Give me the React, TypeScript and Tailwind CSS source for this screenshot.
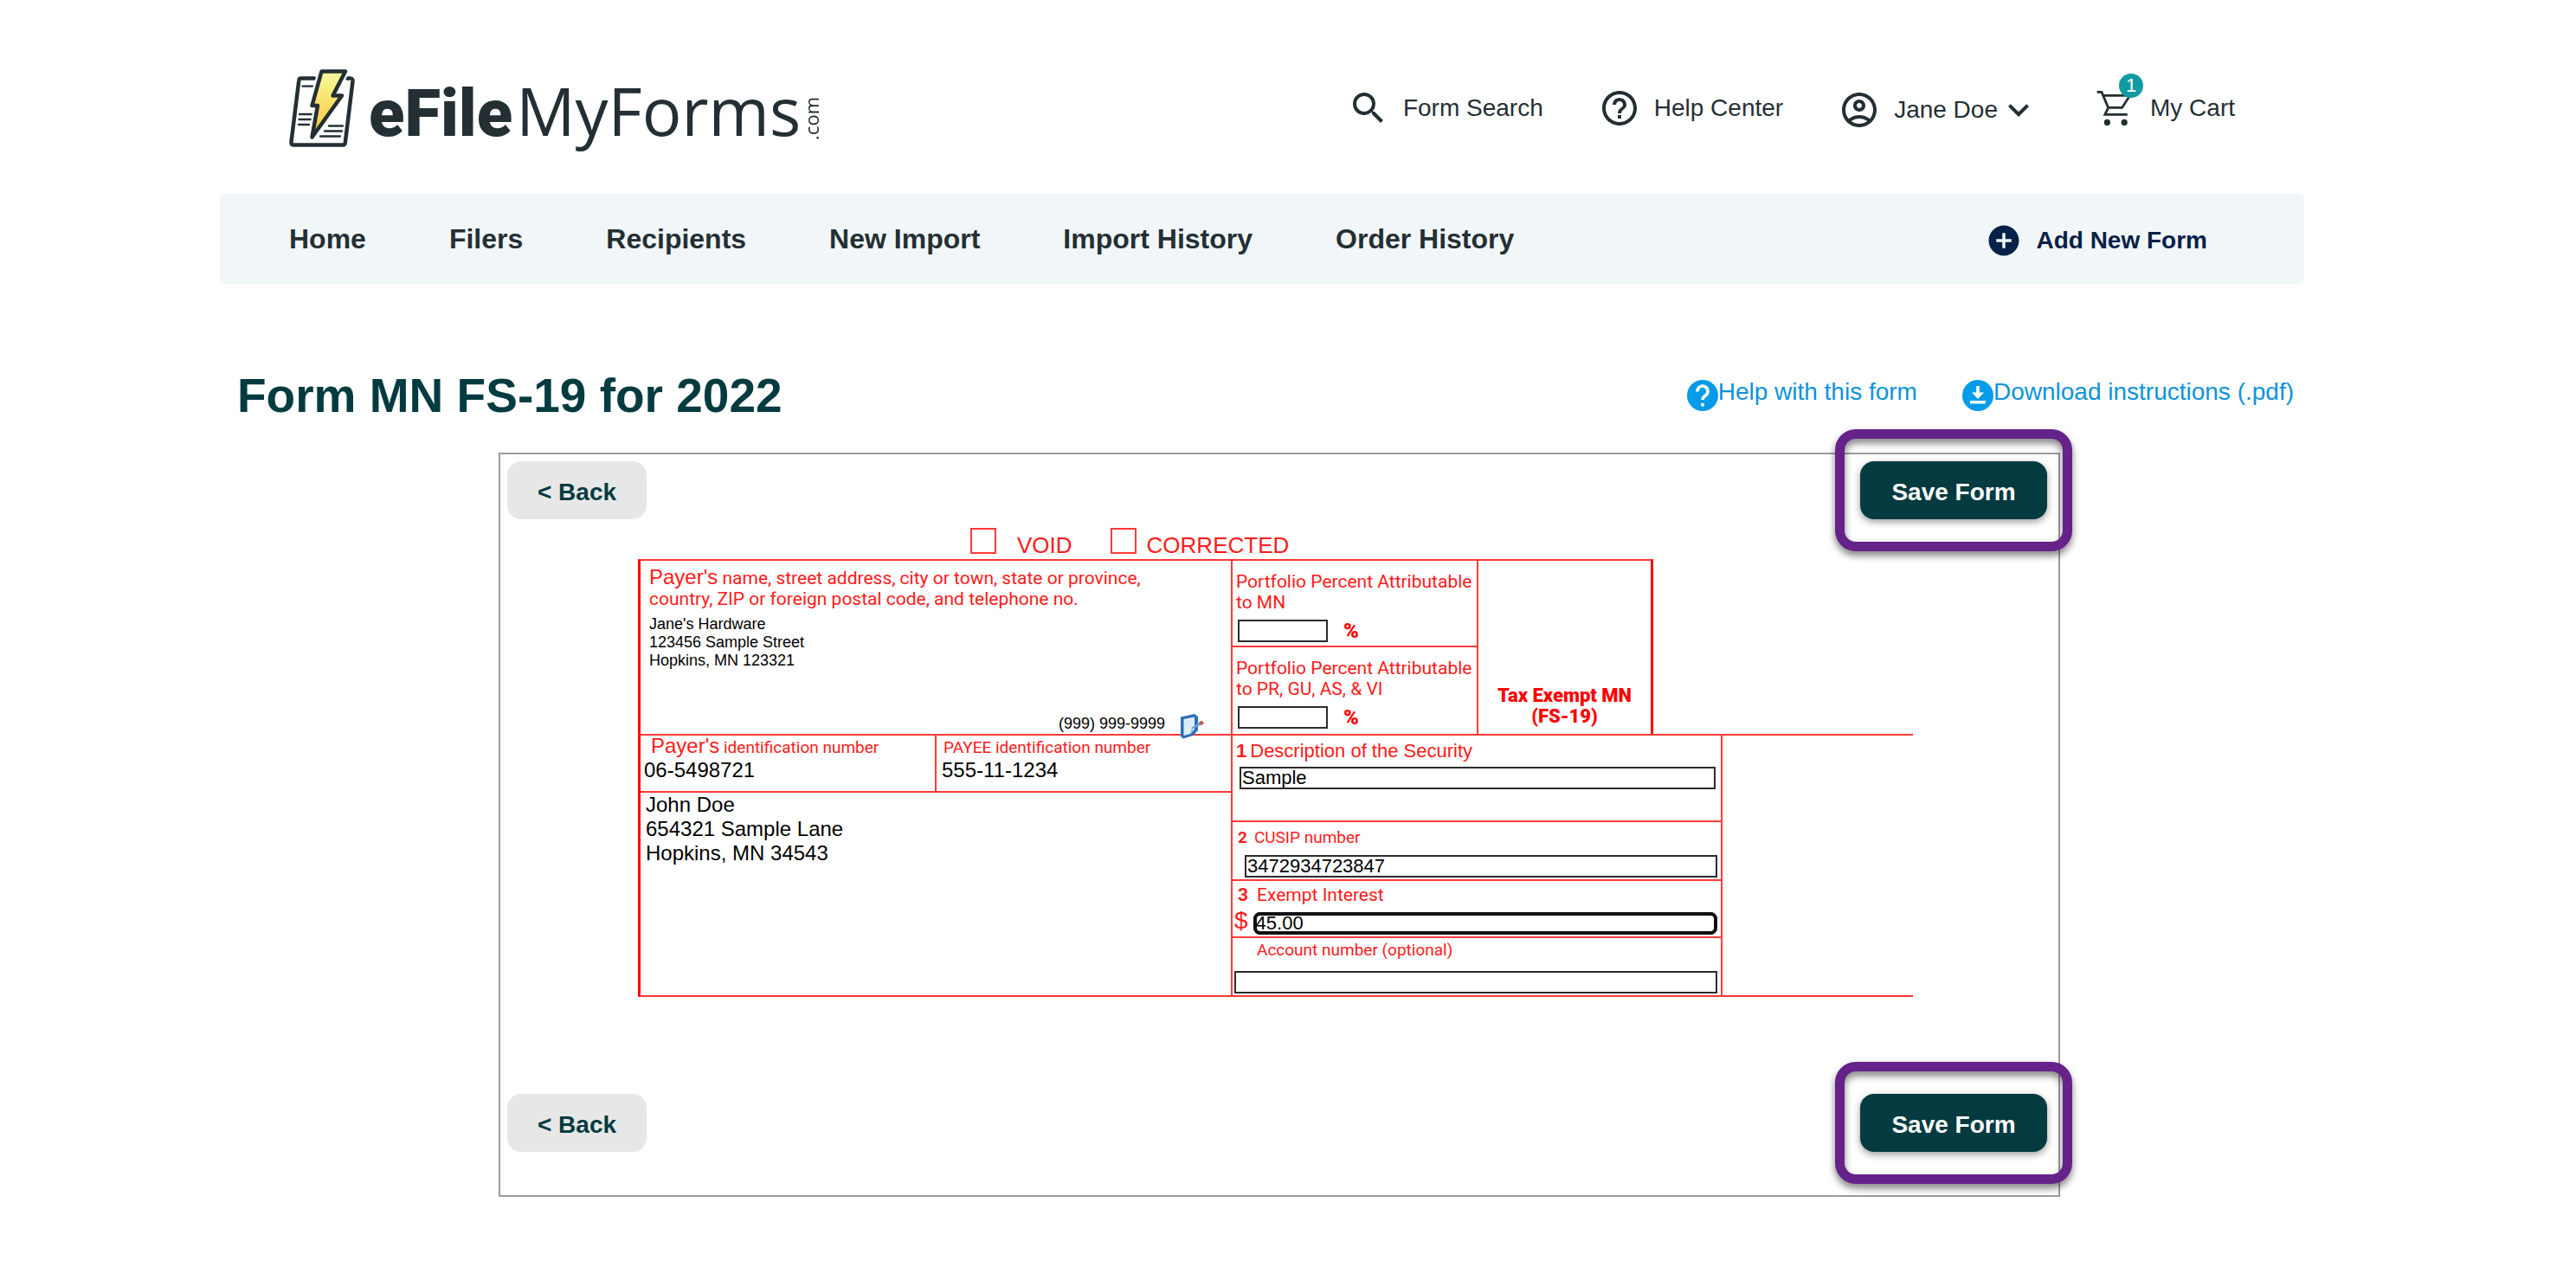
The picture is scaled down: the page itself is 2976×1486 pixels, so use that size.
import type { ReactNode } from "react";
import {
  MdAddCircle,
  MdExpandMore,
  MdHelpOutline,
  MdOutlineAccountCircle,
  MdSearch,
} from "react-icons/md";

const navItems = [
  "Home",
  "Filers",
  "Recipients",
  "New Import",
  "Import History",
  "Order History",
];

function LogoMark() {
  return (
    <svg width="76" height="90" viewBox="0 0 76 90" fill="none" aria-hidden="true">
      <defs>
        <linearGradient id="bolt" x1="0" y1="0" x2="0" y2="1">
          <stop offset="0" stopColor="#f8fb9c" />
          <stop offset="1" stopColor="#fcc035" />
        </linearGradient>
      </defs>
      <g stroke="#242f34" strokeLinecap="round" strokeLinejoin="round">
        <path
          d="M29 10.500H13.500Q11.500 10.500 11.300 13L2.500 84Q2.200 87.500 5 87.500H62Q64.500 87.500 64.800 85L73.500 14Q73.800 10.500 70.500 10.500H67"
          strokeWidth="4.500"
        />
        <path
          d="M15.500 19.700H27M12 52H28M11.500 58H25M11 64H23M46 65.500H62M41 71.500H61M36 77.500H59"
          strokeWidth="2.300"
        />
        <path
          d="M37.500 2.500H65L50.500 30.500H61L26.500 78.500L33 42H26.500Z"
          stroke="#fff"
          strokeWidth="9"
        />
        <path
          d="M37.500 2.500H65L50.500 30.500H61L26.500 78.500L33 42H26.500Z"
          fill="url(#bolt)"
          strokeWidth="4.500"
        />
      </g>
    </svg>
  );
}

function CartIcon() {
  return (
    <svg width="48" height="48" viewBox="0 0 24 24" fill="none" aria-hidden="true">
      <path
        d="M1.300 2.700H4L7.800 11.700H15.800L20.300 4.700H4.900M7.800 11.700L5.900 15.700H18.900"
        stroke="currentColor"
        strokeWidth="1.400"
      />
      <circle cx="7.200" cy="20.200" r="1.800" fill="currentColor" />
      <circle cx="17.100" cy="20.200" r="1.800" fill="currentColor" />
    </svg>
  );
}

function HelpIcon() {
  return (
    <svg width="36" height="36" viewBox="0 0 36 36" fill="none" aria-hidden="true">
      <circle cx="18" cy="18" r="18" fill="#049be8" />
      <path
        d="M12 13.500A6 6 0 1 1 22 17.500Q18 20 18 23"
        stroke="#fff"
        strokeWidth="3.600"
      />
      <path d="M16.200 27h3.600v3.500h-3.600z" fill="#fff" />
    </svg>
  );
}

function DownloadIcon() {
  return (
    <svg width="36" height="36" viewBox="0 0 36 36" aria-hidden="true">
      <circle cx="18" cy="18" r="18" fill="#049be8" />
      <path d="M16.200 7h3.600v7.500h5.200L18 22L11 14.500h5.200zM9 24h18v3.600H9z" fill="#fff" />
    </svg>
  );
}

function EditIcon() {
  return (
    <svg width="30" height="30" viewBox="0 0 30 30" aria-hidden="true">
      <path d="M2 4.500L18 1L22 4V20L16 26L5 29.500L2 27Z" fill="#2f6fb5" />
      <path d="M5.500 7L18 4.500V19L13 24L5.500 26Z" fill="#dcecfa" />
      <path d="M13 24L14 19.500L18 19Z" fill="#8dbbe6" />
      <path d="M14 17L24 10.500L26.500 13.500L15 18.500Z" fill="#6f9fd0" />
      <path d="M23 10.500L26.500 8.500L29 12L26 14Z" fill="#c8574a" />
    </svg>
  );
}

function BackButton() {
  return (
    <button
      type="button"
      className="h-[67px] w-[161px] rounded-2xl bg-[#e7e7e7] pt-1 text-[28px] font-bold text-[#043b40]"
    >
      &lt; Back
    </button>
  );
}

function SaveButton() {
  return (
    <div className="relative">
      <button
        type="button"
        className="h-[67px] w-[216px] rounded-2xl bg-[#043b40] pt-1 text-[28px] font-bold text-white shadow-[0_3px_8px_rgba(0,0,0,0.4)]"
      >
        Save Form
      </button>
      <div className="pointer-events-none absolute -inset-x-[29px] -inset-y-[37px] rounded-3xl border-[11px] border-[#652289] drop-shadow-[0_5px_4px_rgba(0,0,0,0.5)]" />
    </div>
  );
}

type FieldProps = {
  id: string;
  label: ReactNode;
};

function PercentField({ id, label }: FieldProps) {
  return (
    <div className="h-[100px] pl-1 pt-3">
      <label htmlFor={id} className="block text-[21px] leading-6">
        {label}
      </label>
      <div className="mt-2 flex items-center gap-[18px] pl-[2px]">
        <input id={id} className="h-[26px] w-[104px] border-2 border-[#2b2b2b] bg-white" />
        <span className="text-[24px] font-black leading-6 text-[#ff0000]">%</span>
      </div>
    </div>
  );
}

const fieldInput =
  "block h-[26px] border-2 border-[#2b2b2b] bg-white px-px font-['Liberation_Sans',sans-serif] text-[22px] leading-[22px] font-normal text-black";

function FormSheet() {
  return (
    <div className="w-[1473px] font-['Roboto',sans-serif] text-[#ff1a1a]">
      <div className="ml-[384px] flex h-9 gap-[44px] pb-1.5 font-['Liberation_Sans',sans-serif]">
        <label className="flex items-end gap-6 text-[26px] leading-5">
          <input type="checkbox" className="size-[30px] appearance-none border-2 border-[#ff3a3a]" />
          VOID
        </label>
        <label className="flex items-end gap-3 text-[26px] leading-5">
          <input type="checkbox" className="size-[30px] appearance-none border-2 border-[#ff3a3a]" />
          CORRECTED
        </label>
      </div>

      <div className="flex h-[202px] w-[1173px] border-x-[3px] border-t-2 border-[#ff0000] border-t-[#ff3a3a]">
        <div className="flex w-[684px] flex-col border-r-2 border-[#ff3a3a] pt-2">
          <p className="pl-2.5 text-[21px] leading-6">
            <span className="font-['Liberation_Sans',sans-serif] text-[24px] leading-5">Payer's</span>{" "}
            name, street address, city or town, state or province,
            <br />
            country, ZIP or foreign postal code, and telephone no.
          </p>
          <address className="mt-[7px] pl-2.5 font-['Liberation_Sans',sans-serif] text-[18px] not-italic leading-[21px] text-black">
            Jane's Hardware
            <br />
            123456 Sample Street
            <br />
            Hopkins, MN 123321
          </address>
          <div className="mt-auto flex h-6 items-start justify-end gap-4 pr-[30px]">
            <span className="font-['Liberation_Sans',sans-serif] text-[18px] leading-6 text-black">
              (999) 999-9999
            </span>
            <button type="button" aria-label="Edit payer">
              <EditIcon />
            </button>
          </div>
        </div>
        <div className="w-[284px] border-r-2 border-[#ff3a3a]">
          <PercentField
            id="percent-mn"
            label={
              <>
                Portfolio Percent Attributable
                <br />
                to MN
              </>
            }
          />
          <div className="-mt-0.5 border-t-2 border-[#ff3a3a]">
            <PercentField
              id="percent-territories"
              label={
                <>
                  Portfolio Percent Attributable
                  <br />
                  to PR, GU, AS, &amp; VI
                </>
              }
            />
          </div>
        </div>
        <p className="flex-1 self-end pb-2 text-center text-[22px] font-black leading-6 text-[#ff0000]">
          Tax Exempt MN
          <br />
          (FS-19)
        </p>
      </div>

      <div className="flex border-y-2 border-l-[3px] border-[#ff3a3a] border-l-[#ff0000]">
        <div className="w-[684px] border-r-2 border-[#ff3a3a]">
          <div className="flex h-[66px] border-b-2 border-[#ff3a3a]">
            <div className="w-[342px] border-r-2 border-[#ff3a3a] pt-0.5">
              <p className="pl-3 text-[19px] leading-6">
                <span className="font-['Liberation_Sans',sans-serif] text-[24px] leading-5">
                  Payer's
                </span>{" "}
                identification number
              </p>
              <p className="pl-1 font-['Liberation_Sans',sans-serif] text-[24px] leading-7 text-black">
                06-5498721
              </p>
            </div>
            <div className="flex-1 pt-0.5">
              <p className="pl-2 text-[19px] leading-6">PAYEE identification number</p>
              <p className="pl-1.5 font-['Liberation_Sans',sans-serif] text-[24px] leading-7 text-black">
                555-11-1234
              </p>
            </div>
          </div>
          <address className="pl-1.5 font-['Liberation_Sans',sans-serif] text-[24px] not-italic leading-7 text-black">
            John Doe
            <br />
            654321 Sample Lane
            <br />
            Hopkins, MN 34543
          </address>
        </div>

        <div className="w-[566px] border-r-2 border-[#ff3a3a]">
          <div className="h-[100px] border-b-2 border-[#ff3a3a] pl-1 pr-1.5 pt-1.5">
            <label
              htmlFor="description"
              className="flex gap-1 font-['Liberation_Sans',sans-serif] text-[22px] leading-6"
            >
              <b>1</b> Description of the Security
            </label>
            <input
              id="description"
              defaultValue="Sample"
              className={`${fieldInput} ml-1 mt-1.5 w-[550px]`}
            />
          </div>
          <div className="h-[68px] border-b-2 border-[#ff3a3a] pl-1.5 pt-1.5">
            <label htmlFor="cusip" className="flex gap-2 text-[19px] leading-6">
              <b>2</b> CUSIP number
            </label>
            <input
              id="cusip"
              defaultValue="3472934723847"
              className={`${fieldInput} ml-2 mt-2 w-[546px]`}
            />
          </div>
          <div className="h-[66px] border-b-2 border-[#ff3a3a] pt-1">
            <label htmlFor="interest" className="flex gap-2.5 pl-1.5 text-[21px] leading-6">
              <b>3</b> Exempt Interest
            </label>
            <div className="mt-2 flex items-start gap-[6px] pl-[2px]">
              <span className="font-['Liberation_Sans',sans-serif] text-[28px] leading-5">$</span>
              <input
                id="interest"
                defaultValue="45.00"
                className={`${fieldInput} w-[536px] rounded-lg outline-4 -outline-offset-4 outline-[#111]`}
              />
            </div>
          </div>
          <div className="h-[66px] pl-[2px] pt-0.5">
            <label htmlFor="account" className="block pl-[26px] text-[19px] leading-6">
              Account number (optional)
            </label>
            <input id="account" className={`${fieldInput} mt-3 w-[558px]`} />
          </div>
        </div>
      </div>
    </div>
  );
}

export default function App() {
  return (
    <div className="min-h-screen bg-white pr-[60px] font-['Liberation_Sans',Arial,sans-serif] text-[#242f34]">
      <div className="mx-auto max-w-[2408px]">
        <header className="flex h-56 items-center justify-between px-20 pt-[26px]">
          <a href="#" className="flex items-center">
            <LogoMark />
            <span className="flex items-baseline pl-4 pt-2 leading-none">
              <span className="font-['Roboto',sans-serif] text-[76px] font-black">eFile</span>
              <span className="pl-1 font-['Open_Sans',sans-serif] text-[76px]">MyForms</span>
            </span>
            <span className="mt-6 rotate-180 font-['Open_Sans',sans-serif] text-[22px] leading-6 [writing-mode:vertical-rl]">
              .com
            </span>
          </a>

          <div className="flex items-center gap-16 text-[28px]">
            <a href="#" className="flex items-center gap-4">
              <MdSearch size={48} />
              Form Search
            </a>
            <a href="#" className="flex items-center gap-4">
              <MdHelpOutline size={48} />
              Help Center
            </a>
            <button type="button" className="flex items-center pt-1">
              <MdOutlineAccountCircle size={48} />
              <span className="pl-4">Jane Doe</span>
              <MdExpandMore size={48} />
            </button>
            <a href="#" className="flex items-center gap-4">
              <span className="relative">
                <CartIcon />
                <span className="absolute -right-2 -top-4 flex size-7 items-center justify-center rounded-full bg-[#129aa3] text-[22px] leading-none text-white">
                  1
                </span>
              </span>
              My Cart
            </a>
          </div>
        </header>

        <nav className="flex h-[104px] items-center justify-between rounded-md bg-[#f1f6f9] pl-20 pr-28">
          <ul className="flex gap-24 text-[32px] font-bold">
            {navItems.map((item) => (
              <li key={item}>
                <a href="#">{item}</a>
              </li>
            ))}
          </ul>
          <a href="#" className="flex items-center gap-4 pt-1 text-[28px] font-bold text-[#082148]">
            <MdAddCircle size={42} />
            Add New Form
          </a>
        </nav>

        <main>
          <div className="flex items-center justify-between pl-5 pr-3 pt-24">
            <h1 className="text-[55px] font-bold leading-[66px] text-[#043b40]">
              Form MN FS-19 for 2022
            </h1>
            <div className="flex gap-[52px] text-[28px] leading-9 text-[#0c93dc]">
              <a href="#" className="flex items-center">
                <HelpIcon />
                <span className="pb-2">Help with this form</span>
              </a>
              <a href="#" className="flex items-center">
                <DownloadIcon />
                <span className="pb-2">Download instructions (.pdf)</span>
              </a>
            </div>
          </div>

          <form className="ml-[322px] mr-[282px] mt-[33px] border-2 border-[#9c9c9c] pb-[50px] pl-2 pr-[13px] pt-2">
            <div className="flex justify-between">
              <BackButton />
              <SaveButton />
            </div>
            <div className="ml-[151px] mt-2.5">
              <FormSheet />
            </div>
            <div className="mt-28 flex justify-between">
              <BackButton />
              <SaveButton />
            </div>
          </form>
        </main>
      </div>
    </div>
  );
}
